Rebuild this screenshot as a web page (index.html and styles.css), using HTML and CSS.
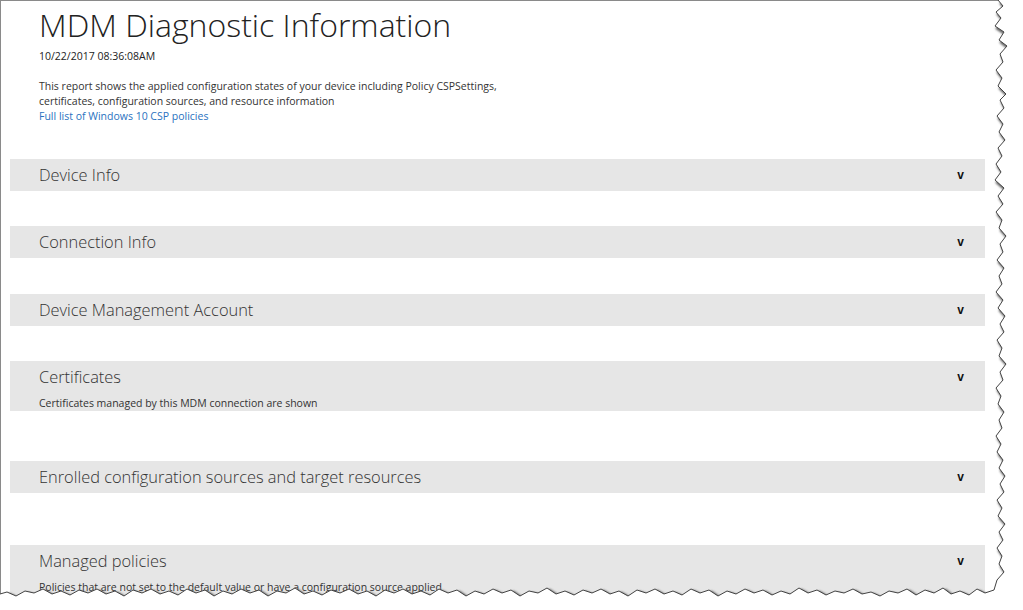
FILE: index.html
```html
<!DOCTYPE html>
<html lang="en">
<head>
<meta charset="utf-8">
<title>MDM Diagnostic Information</title>
<link rel="stylesheet" href="styles.css">
</head>
<body>
<div class="page">
  <header class="intro">
    <h1 class="title">MDM Diagnostic Information</h1>
    <p class="date">10/22/2017 08:36:08AM</p>
    <p class="desc">This report shows the applied configuration states of your device including Policy CSPSettings,<br>certificates, configuration sources, and resource information</p>
    <a class="link" href="#">Full list of Windows 10 CSP policies</a>
  </header>

  <section class="sec">
    <div class="bar"><div class="bar-head"><h2 class="bar-title">Device Info</h2><span class="chev">v</span></div></div>
  </section>
  <section class="sec sec-mid">
    <div class="bar"><div class="bar-head"><h2 class="bar-title">Connection Info</h2><span class="chev">v</span></div></div>
  </section>
  <section class="sec">
    <div class="bar"><div class="bar-head"><h2 class="bar-title">Device Management Account</h2><span class="chev">v</span></div></div>
  </section>
  <section class="sec sec-tall">
    <div class="bar"><div class="bar-head"><h2 class="bar-title">Certificates</h2><span class="chev">v</span></div><p class="bar-sub">Certificates managed by this MDM connection are shown</p></div>
  </section>
  <section class="sec sec-taller">
    <div class="bar"><div class="bar-head"><h2 class="bar-title">Enrolled configuration sources and target resources</h2><span class="chev">v</span></div></div>
  </section>
  <section class="sec">
    <div class="bar"><div class="bar-head"><h2 class="bar-title">Managed policies</h2><span class="chev">v</span></div><p class="bar-sub">Policies that are not set to the default value or have a configuration source applied</p></div>
  </section>
</div>

<svg class="torn" width="1023" height="610" viewBox="0 0 1023 610" aria-hidden="true">
  <defs>
    <filter id="sh" x="-5%" y="-5%" width="110%" height="110%">
      <feGaussianBlur stdDeviation="1.2"/>
    </filter>
  </defs>
  <path class="torn-shadow" filter="url(#sh)" transform="translate(2.5 2.5)" d="M998,0 L1003,6 L996,12 L1001,18 L995,26 L1004,32 L999,40 L1007,46 L1000,54 L1003,62 L996,70 L1002,78 L998,86 L1006,94 L1000,100 L1004,108 L997,116 L1003,124 L999,132 L1005,140 L998,148 L1002,156 L996,164 L1001,172 L995,180 L1004,188 L998,196 L1003,204 L996,212 L1002,220 L999,228 L1006,236 L1000,244 L1003,252 L997,260 L1004,268 L999,276 L1002,284 L996,292 L1003,300 L998,308 L1005,316 L1000,324 L1004,332 L997,340 L1002,348 L999,356 L1006,364 L1000,372 L1003,380 L996,388 L1001,396 L998,404 L1004,412 L999,420 L1002,428 L996,436 L1001,444 L997,452 L1003,460 L999,468 L1005,476 L1000,484 L1004,492 L997,500 L1002,508 L998,516 L1005,524 L999,532 L1003,540 L997,548 L1002,556 L999,564 L1004,572 L997,580 L994,590 L985,593 L977,589 L969,595 L960,591 L951,594 L943,588 L934,593 L925,590 L916,595 L907,589 L898,593 L889,591 L880,596 L871,592 L862,594 L853,589 L844,593 L835,591 L826,595 L817,590 L808,593 L799,588 L790,594 L781,591 L772,595 L763,590 L754,593 L745,589 L736,594 L727,591 L718,596 L709,590 L700,593 L691,589 L682,595 L673,591 L664,594 L655,589 L646,593 L637,590 L628,596 L619,591 L610,594 L601,589 L592,593 L583,590 L574,595 L565,591 L556,594 L547,588 L538,593 L529,591 L520,596 L511,590 L502,593 L493,589 L484,594 L475,591 L466,596 L457,590 L448,593 L439,589 L430,595 L421,591 L412,594 L403,589 L394,593 L385,590 L376,596 L367,591 L358,594 L349,589 L340,593 L331,590 L322,595 L313,591 L304,594 L295,588 L286,593 L277,591 L268,596 L259,590 L250,593 L241,589 L232,594 L223,591 L214,596 L205,590 L196,593 L187,589 L178,595 L169,591 L160,594 L151,589 L142,593 L133,590 L124,596 L115,591 L106,594 L97,589 L88,593 L79,590 L70,595 L61,591 L52,594 L43,589 L34,593 L25,591 L16,596 L7,592 L0,594"/>
  <path class="torn-mask" fill-rule="evenodd" d="M0,0 H1023 V610 H0 Z M0,0 L998,0 L1003,6 L996,12 L1001,18 L995,26 L1004,32 L999,40 L1007,46 L1000,54 L1003,62 L996,70 L1002,78 L998,86 L1006,94 L1000,100 L1004,108 L997,116 L1003,124 L999,132 L1005,140 L998,148 L1002,156 L996,164 L1001,172 L995,180 L1004,188 L998,196 L1003,204 L996,212 L1002,220 L999,228 L1006,236 L1000,244 L1003,252 L997,260 L1004,268 L999,276 L1002,284 L996,292 L1003,300 L998,308 L1005,316 L1000,324 L1004,332 L997,340 L1002,348 L999,356 L1006,364 L1000,372 L1003,380 L996,388 L1001,396 L998,404 L1004,412 L999,420 L1002,428 L996,436 L1001,444 L997,452 L1003,460 L999,468 L1005,476 L1000,484 L1004,492 L997,500 L1002,508 L998,516 L1005,524 L999,532 L1003,540 L997,548 L1002,556 L999,564 L1004,572 L997,580 L994,590 L985,593 L977,589 L969,595 L960,591 L951,594 L943,588 L934,593 L925,590 L916,595 L907,589 L898,593 L889,591 L880,596 L871,592 L862,594 L853,589 L844,593 L835,591 L826,595 L817,590 L808,593 L799,588 L790,594 L781,591 L772,595 L763,590 L754,593 L745,589 L736,594 L727,591 L718,596 L709,590 L700,593 L691,589 L682,595 L673,591 L664,594 L655,589 L646,593 L637,590 L628,596 L619,591 L610,594 L601,589 L592,593 L583,590 L574,595 L565,591 L556,594 L547,588 L538,593 L529,591 L520,596 L511,590 L502,593 L493,589 L484,594 L475,591 L466,596 L457,590 L448,593 L439,589 L430,595 L421,591 L412,594 L403,589 L394,593 L385,590 L376,596 L367,591 L358,594 L349,589 L340,593 L331,590 L322,595 L313,591 L304,594 L295,588 L286,593 L277,591 L268,596 L259,590 L250,593 L241,589 L232,594 L223,591 L214,596 L205,590 L196,593 L187,589 L178,595 L169,591 L160,594 L151,589 L142,593 L133,590 L124,596 L115,591 L106,594 L97,589 L88,593 L79,590 L70,595 L61,591 L52,594 L43,589 L34,593 L25,591 L16,596 L7,592 L0,594 Z"/>
  <path class="torn-edge" d="M998,0 L1003,6 L996,12 L1001,18 L995,26 L1004,32 L999,40 L1007,46 L1000,54 L1003,62 L996,70 L1002,78 L998,86 L1006,94 L1000,100 L1004,108 L997,116 L1003,124 L999,132 L1005,140 L998,148 L1002,156 L996,164 L1001,172 L995,180 L1004,188 L998,196 L1003,204 L996,212 L1002,220 L999,228 L1006,236 L1000,244 L1003,252 L997,260 L1004,268 L999,276 L1002,284 L996,292 L1003,300 L998,308 L1005,316 L1000,324 L1004,332 L997,340 L1002,348 L999,356 L1006,364 L1000,372 L1003,380 L996,388 L1001,396 L998,404 L1004,412 L999,420 L1002,428 L996,436 L1001,444 L997,452 L1003,460 L999,468 L1005,476 L1000,484 L1004,492 L997,500 L1002,508 L998,516 L1005,524 L999,532 L1003,540 L997,548 L1002,556 L999,564 L1004,572 L997,580 L994,590 L985,593 L977,589 L969,595 L960,591 L951,594 L943,588 L934,593 L925,590 L916,595 L907,589 L898,593 L889,591 L880,596 L871,592 L862,594 L853,589 L844,593 L835,591 L826,595 L817,590 L808,593 L799,588 L790,594 L781,591 L772,595 L763,590 L754,593 L745,589 L736,594 L727,591 L718,596 L709,590 L700,593 L691,589 L682,595 L673,591 L664,594 L655,589 L646,593 L637,590 L628,596 L619,591 L610,594 L601,589 L592,593 L583,590 L574,595 L565,591 L556,594 L547,588 L538,593 L529,591 L520,596 L511,590 L502,593 L493,589 L484,594 L475,591 L466,596 L457,590 L448,593 L439,589 L430,595 L421,591 L412,594 L403,589 L394,593 L385,590 L376,596 L367,591 L358,594 L349,589 L340,593 L331,590 L322,595 L313,591 L304,594 L295,588 L286,593 L277,591 L268,596 L259,590 L250,593 L241,589 L232,594 L223,591 L214,596 L205,590 L196,593 L187,589 L178,595 L169,591 L160,594 L151,589 L142,593 L133,590 L124,596 L115,591 L106,594 L97,589 L88,593 L79,590 L70,595 L61,591 L52,594 L43,589 L34,593 L25,591 L16,596 L7,592 L0,594"/>
</svg>
</body>
</html>
```

FILE: styles.css
```css
html, body {
  margin: 0;
  padding: 0;
  background: #ffffff;
}

body {
  width: 1023px;
  height: 610px;
  overflow: hidden;
  position: relative;
  font-family: "Open Sans", "Liberation Sans", sans-serif;
  color: #333333;
}

.page {
  border-left: 1px solid #8a8a8a;
  border-top: 1px solid #8a8a8a;
  width: 1010px;
  height: 609px;
  box-sizing: border-box;
  padding-left: 9px;
}

.intro {
  padding-left: 29px;
  padding-bottom: 35px;
}

.title {
  margin: 0;
  padding-top: 1px;
  font-size: 32px;
  font-weight: 300;
  color: #222222;
  line-height: 45px;
}

.date {
  margin: 2px 0 0;
  font-size: 10.5px;
  line-height: 15px;
  color: #222222;
}

.desc {
  margin: 15px 0 0;
  font-size: 10.5px;
  line-height: 15px;
  color: #333333;
}

.link {
  display: block;
  font-size: 10.5px;
  line-height: 15px;
  color: #2a72c0;
  text-decoration: none;
}

.sec {
  width: 975px;
  margin-bottom: 35px;
}

.sec-mid {
  margin-bottom: 36px;
}

.sec-tall {
  margin-bottom: 50px;
}

.sec-taller {
  margin-bottom: 52px;
}

.bar {
  background: #e6e6e6;
}

.bar-head {
  display: flex;
  align-items: center;
  justify-content: space-between;
  height: 32px;
  padding: 0 21px 0 29px;
}

.bar-title {
  margin: 0;
  font-size: 16.4px;
  font-weight: 300;
  color: #333333;
  line-height: 32px;
}

.chev {
  font-family: "Liberation Sans", Arial, sans-serif;
  font-weight: bold;
  font-size: 12px;
  color: #111111;
}

.bar-sub {
  margin: 0;
  padding: 2px 0 0 29px;
  font-size: 10.5px;
  line-height: 16px;
  color: #333333;
}

.torn {
  position: absolute;
  left: 0;
  top: 0;
  pointer-events: none;
}

.torn-shadow {
  fill: none;
  stroke: #5a5a5a;
  stroke-width: 3;
}

.torn-mask {
  fill: #ffffff;
}

.torn-edge {
  fill: none;
  stroke: #444444;
  stroke-width: 1;
}
```
